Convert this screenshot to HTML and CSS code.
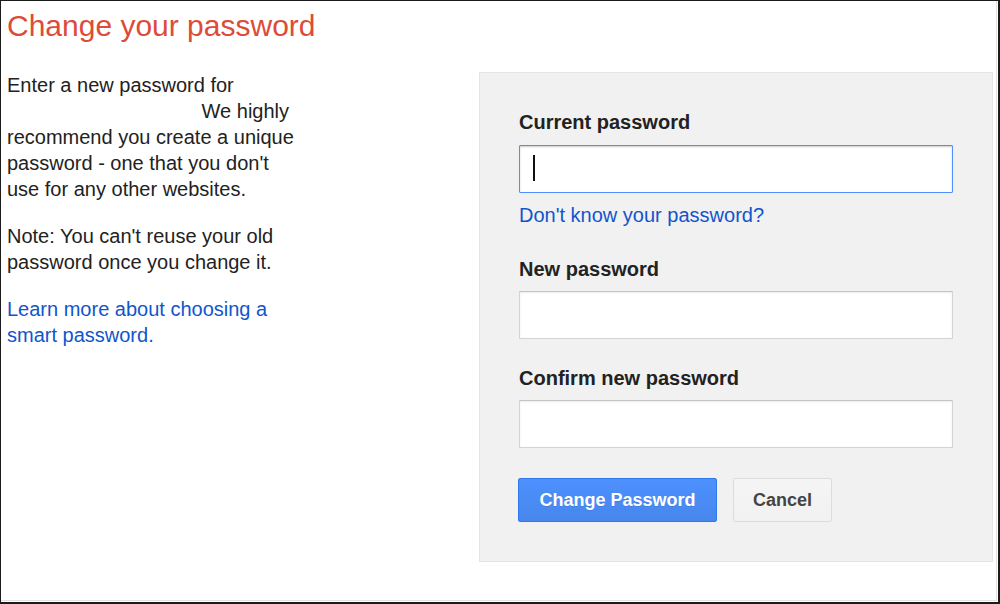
FILE: index.html
```html
<!DOCTYPE html>
<html lang="en">
<head>
<meta charset="utf-8">
<title>Change your password</title>
<link rel="stylesheet" href="styles.css">
</head>
<body>
<div class="frame">
  <h1 class="title">Change your password</h1>
  <div class="content">
    <div class="intro">
      <p class="intro-text">Enter a new password for <span class="email-gap"></span> We highly recommend you create a unique password - one that you don't use for any other websites.</p>
      <p class="intro-text">Note: You can't reuse your old password once you change it.</p>
      <p class="intro-text"><a class="link" href="#">Learn more about choosing a smart password.</a></p>
    </div>
    <form class="panel">
      <label class="field-label" for="cur">Current password</label>
      <div class="input-wrap">
        <input class="text-input is-focused" id="cur" type="password">
        <span class="caret"></span>
      </div>
      <a class="link forgot" href="#">Don't know your password?</a>
      <label class="field-label label-new" for="np">New password</label>
      <input class="text-input" id="np" type="password">
      <label class="field-label label-confirm" for="cp">Confirm new password</label>
      <input class="text-input" id="cp" type="password">
      <div class="actions">
        <button class="btn btn-primary" type="button">Change Password</button>
        <button class="btn btn-secondary" type="button">Cancel</button>
      </div>
    </form>
  </div>
</div>
</body>
</html>
```
FILE: styles.css
```css
html, body {
  margin: 0;
  padding: 0;
  background: #fff;
}

body {
  font-family: "Liberation Sans", Arial, sans-serif;
  color: #222;
}

.frame {
  box-sizing: border-box;
  width: 1000px;
  height: 604px;
  border-style: solid;
  border-color: #1b1b1b;
  border-width: 1px 2px 2px 1px;
  padding: 0 5px 0 6px;
  box-shadow: inset -1px -1px 0 #fff, inset -2px -2px 0 #e2e2e2;
  overflow: hidden;
}

.title {
  margin: 8px 0 0;
  font-size: 30px;
  line-height: 34px;
  font-weight: normal;
  color: #dd4b39;
}

.content {
  display: grid;
  grid-template-columns: 472px 514px;
  margin-top: 29px;
  align-items: start;
}

.intro {
  width: 290px;
}

.intro-text {
  margin: 0 0 21px;
  font-size: 20px;
  line-height: 26px;
  color: #222;
}

.email-gap {
  display: inline-block;
  width: 189px;
  height: 1px;
}

.link {
  color: #15c;
  text-decoration: none;
}

.panel {
  background: #f1f1f1;
  border: 1px solid #e5e5e5;
  padding: 36px 39px 39px 39px;
  display: flex;
  flex-direction: column;
  align-items: flex-start;
}

.field-label {
  display: block;
  font-size: 20px;
  line-height: 26px;
  font-weight: bold;
  color: #222;
}

.label-new {
  margin-top: 28px;
}

.label-confirm {
  margin-top: 26px;
}

.input-wrap {
  position: relative;
  margin-top: 10px;
}

.text-input {
  display: block;
  box-sizing: border-box;
  width: 434px;
  height: 48px;
  margin: 9px 0 0;
  padding: 0 12px;
  background: #fff;
  border: 1px solid #d3d3d3;
  border-top-color: #c4c4c4;
  border-radius: 1px;
  box-shadow: inset 0 1px 2px rgba(0, 0, 0, 0.08);
  font-size: 20px;
  outline: none;
}

.input-wrap .text-input {
  margin-top: 0;
}

.text-input.is-focused {
  border-color: #4d90fe;
  box-shadow: inset 0 1px 2px rgba(0, 0, 0, 0.2);
}

.caret {
  position: absolute;
  left: 14px;
  top: 10px;
  width: 2px;
  height: 26px;
  background: #111;
}

.forgot {
  display: block;
  margin-top: 9px;
  font-size: 20px;
  line-height: 26px;
}

.actions {
  display: flex;
  gap: 16px;
  margin-top: 30px;
  margin-left: -1px;
}

.btn {
  box-sizing: border-box;
  height: 44px;
  border-radius: 2px;
  font-family: "Liberation Sans", Arial, sans-serif;
  font-size: 18px;
  font-weight: bold;
  padding: 0;
  cursor: pointer;
}

.btn-primary {
  width: 199px;
  color: #fff;
  background: linear-gradient(#4d90fe, #4787ed);
  border: 1px solid #3079ed;
  text-shadow: 0 1px rgba(0, 0, 0, 0.1);
}

.btn-secondary {
  width: 99px;
  color: #444;
  background: linear-gradient(#f5f5f5, #f1f1f1);
  border: 1px solid #dcdcdc;
}
```
